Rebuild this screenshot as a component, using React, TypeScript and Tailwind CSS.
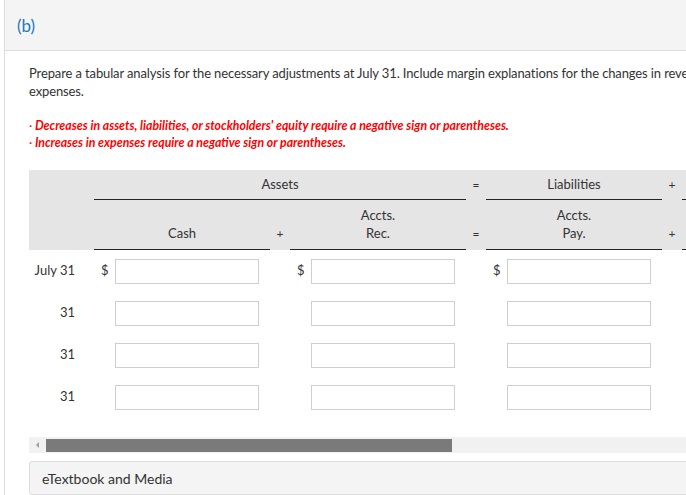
import React from "react";

const font = { fontFamily: "Lato, 'Open Sans', sans-serif" };

function ValueCell({ dollar }: { dollar: boolean }) {
  return (
    <div className="flex items-center">
      <span className="w-[21px] pl-[7px] text-[13px] text-[#333]">{dollar ? "$" : ""}</span>
      <div className="w-[144px] h-[25px] border border-[#cfcfcf] bg-white" />
    </div>
  );
}

export default function App() {
  const rows = ["July 31", "31", "31", "31"];
  return (
    <div className="w-[686px] h-[495px] overflow-hidden bg-white" style={font}>
      <div className="ml-[4px] w-[1100px] h-[495px] border-l border-[#dcdcdc]">
        <div className="h-[51px] bg-[#f4f4f4] border-b border-[#dcdcdc] pl-[12px] pt-[2px] flex items-center">
          <span className="text-[17px] text-[#1f78bd]">(b)</span>
        </div>
        <div className="pl-[24px]">
          <p className="mt-[13px] text-[13px] tracking-[-0.12px] leading-[18px] text-[#333] w-[900px]">
            Prepare a tabular analysis for the necessary adjustments at July 31. Include margin explanations for the changes in revenues and
            <br />
            expenses.
          </p>
          <div className="mt-[17px] text-[12.3px] leading-[17px] text-[#ff0000] font-bold italic">
            <div>
              <span className="not-italic font-normal">·</span> Decreases in assets, liabilities, or stockholders' equity require a negative sign or parentheses.
            </div>
            <div>
              <span className="not-italic font-normal">·</span> Increases in expenses require a negative sign or parentheses.
            </div>
          </div>

          <div className="mt-[19px] grid grid-cols-[65px_176px_20px_176px_20px_176px_20px_176px] text-[13px] text-[#333]">
            {/* header row 1 */}
            <div className="h-[30px] bg-[#e5e5e5]" />
            <div className="col-span-3 h-[30px] bg-[#e5e5e5] border-b border-[#222] flex items-center justify-center">Assets</div>
            <div className="h-[30px] bg-[#e5e5e5] flex items-center justify-center text-[12px]">=</div>
            <div className="h-[30px] bg-[#e5e5e5] border-b border-[#222] flex items-center justify-center">Liabilities</div>
            <div className="h-[30px] bg-[#e5e5e5] flex items-center justify-center text-[12px]">+</div>
            <div className="h-[30px] bg-[#e5e5e5] border-b border-[#222] flex items-center justify-center">Stockholders' Equity</div>

            {/* header row 2 */}
            <div className="h-[50px] bg-[#e5e5e5]" />
            <div className="h-[50px] bg-[#e5e5e5] border-b border-[#222] flex flex-col justify-end items-center pb-[7px] leading-[18px]">Cash</div>
            <div className="h-[50px] bg-[#e5e5e5] flex flex-col justify-end items-center pb-[7px] leading-[18px] text-[12px]">+</div>
            <div className="h-[50px] bg-[#e5e5e5] border-b border-[#222] flex flex-col justify-end items-center pb-[7px] leading-[18px]">
              <span>Accts.</span>
              <span>Rec.</span>
            </div>
            <div className="h-[50px] bg-[#e5e5e5] flex flex-col justify-end items-center pb-[7px] leading-[18px] text-[12px]">=</div>
            <div className="h-[50px] bg-[#e5e5e5] border-b border-[#222] flex flex-col justify-end items-center pb-[7px] leading-[18px]">
              <span>Accts.</span>
              <span>Pay.</span>
            </div>
            <div className="h-[50px] bg-[#e5e5e5] flex flex-col justify-end items-center pb-[7px] leading-[18px] text-[12px]">+</div>
            <div className="h-[50px] bg-[#e5e5e5] border-b border-[#222] flex flex-col justify-end items-center pb-[7px] leading-[18px]">
              <span>Common</span>
              <span>Stock</span>
            </div>

            {rows.map((r, i) => (
              <React.Fragment key={i}>
                <div className="h-[42px] flex items-center justify-end pr-[19px] text-[13px]">{r}</div>
                <ValueCell dollar={i === 0} />
                <div />
                <ValueCell dollar={i === 0} />
                <div />
                <ValueCell dollar={i === 0} />
                <div />
                <ValueCell dollar={i === 0} />
              </React.Fragment>
            ))}
          </div>

          <div className="mt-[19px] h-[16px] bg-[#f1f1f1] flex items-center">
            <div className="w-[17px] flex justify-center">
              <div className="w-0 h-0 border-y-[3px] border-y-transparent border-r-[3px] border-r-[#a0a0a0]" />
            </div>
            <div className="w-[406px] h-[13px] bg-[#7a7a7a]" />
          </div>

          <div className="mt-[8px] h-[34px] bg-[#f4f4f4] border border-[#dcdcdc] rounded-[3px] flex items-center pl-[12px] text-[14px] text-[#333]">
            eTextbook and Media
          </div>
        </div>
      </div>
    </div>
  );
}
